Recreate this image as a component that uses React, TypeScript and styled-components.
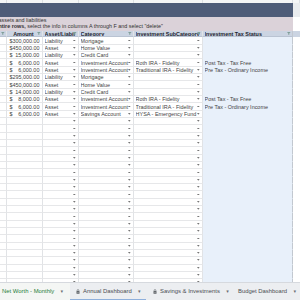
import React from 'react';
import styled, { createGlobalStyle } from 'styled-components';

const Global = createGlobalStyle`
  html, body { margin: 0; padding: 0; background: #fff; overflow: hidden; }
  body { font-family: "Liberation Sans", Arial, sans-serif; }
`;

const COLS = '7px 36px 36px 55px 69px 90px 7px';

const Page = styled.div`
  width: 300px;
  height: 300px;
  display: flex;
  flex-direction: column;
  overflow: hidden;
  background: #fff;
`;

const TopStrip = styled.div`
  height: 3.3px;
  flex: none;
  display: grid;
  grid-template-columns: ${COLS};
  background: #f4f5f6;
`;

const StripCell = styled.div`
  border-right: 1px solid #dcdfe3;
`;

const Band = styled.div<{ $h: number }>`
  height: ${(p) => p.$h}px;
  flex: none;
  display: grid;
  grid-template-columns: 293px 7px;
  overflow: hidden;
`;

const DarkFill = styled.div`
  background: #4e5c78;
`;

const SideFill = styled.div<{ $bg: string }>`
  background: ${(p) => p.$bg};
`;

const NoteFill = styled.div`
  background: #dbd2d9;
  color: #333;
  font-size: 5.4px;
  line-height: 5.6px;
  padding-top: 1.2px;
  white-space: nowrap;
  overflow: hidden;
`;

const NoteLine = styled.div`
  margin-left: -1.5px;
`;

const Sheet = styled.div`
  flex: 1;
  overflow: hidden;
  display: flex;
  flex-direction: column;
`;

const Row = styled.div<{ $header?: boolean }>`
  flex: none;
  height: ${(p) => (p.$header ? 6.8 : 7.33)}px;
  display: grid;
  grid-template-columns: ${COLS};
  background: ${(p) => (p.$header ? '#cbd4e2' : '#fff')};
  font-size: 5.45px;
`;

const Cell = styled.div<{ $tax?: boolean; $header?: boolean; $edge?: boolean }>`
  position: relative;
  box-sizing: border-box;
  display: flex;
  align-items: center;
  padding-left: 1.6px;
  white-space: nowrap;
  overflow: hidden;
  color: ${(p) => (p.$header ? '#1e2530' : '#444')};
  font-weight: ${(p) => (p.$header ? 700 : 400)};
  background: ${(p) => (p.$header ? 'transparent' : p.$tax ? '#e8f0fa' : '#fff')};
  border-bottom: 1px solid ${(p) => (p.$header ? '#b9c3d2' : p.$tax ? '#e8f0fa' : '#e6e7e9')};
  border-right: 1px solid ${(p) => (p.$edge ? '#c2c8d0' : '#e1e3e6')};
`;

const BlankCell = styled.div<{ $header?: boolean }>`
  background: ${(p) => (p.$header ? 'transparent' : '#fff')};
`;

const Money = styled.div`
  display: flex;
  justify-content: space-between;
  width: 100%;
  padding-right: 2.6px;
  padding-left: 0.8px;
  box-sizing: border-box;
`;

const Label = styled.span`
  flex: 1;
  overflow: hidden;
`;

const Arrow = styled.svg`
  position: absolute;
  right: 2.4px;
  top: 50%;
  margin-top: -1px;
  width: 2.6px;
  height: 1.8px;
`;

const Funnel = styled.svg`
  position: absolute;
  right: 1.4px;
  top: 50%;
  margin-top: -1.6px;
  width: 3.6px;
  height: 3.2px;
`;

const TabBar = styled.div`
  height: 18px;
  flex: none;
  display: flex;
  align-items: stretch;
  background: #eceef1;
  border-top: 1px solid #d6d9de;
  box-sizing: border-box;
  font-size: 5.9px;
`;

const Tab = styled.div<{ $active?: boolean; $hover?: boolean; $w: number; $pad: number }>`
  width: ${(p) => p.$w}px;
  flex: none;
  box-sizing: border-box;
  display: flex;
  align-items: center;
  gap: 3px;
  padding-left: ${(p) => p.$pad}px;
  white-space: nowrap;
  color: ${(p) => (p.$active ? '#1f7d3a' : '#4a4d52')};
  background: ${(p) => (p.$active ? '#f4f6f4' : 'transparent')};
  border-bottom: 1.5px solid ${(p) => (p.$hover ? '#8fb0dc' : 'transparent')};
`;

const TabCaret = styled.span`
  font-size: 4.2px;
  margin-left: 2.5px;
  color: #6a6d72;
`;

const Lock = () => (
  <svg width="4" height="5" viewBox="0 0 8 10">
    <rect x="1" y="4" width="6" height="5.5" rx="0.6" fill="#5f6368" />
    <path d="M2.3 4V2.8a1.7 1.7 0 0 1 3.4 0V4" fill="none" stroke="#5f6368" strokeWidth="1.2" />
    <rect x="3.4" y="5.8" width="1.2" height="2" fill="#eceef1" />
  </svg>
);

const DropArrow = () => (
  <Arrow viewBox="0 0 6 4">
    <path d="M0 0h6L3 4z" fill="#777" />
  </Arrow>
);

const FilterIcon = () => (
  <Funnel viewBox="0 0 8 7">
    <path d="M0 0h8L5 3.4V7L3 6V3.4z" fill="#7f9e98" />
  </Funnel>
);

type Entry = { amt: string; type: string; cat: string; sub: string; tax: string };

const DATA: Entry[] = [
  { amt: '300,000.00', type: 'Liability', cat: 'Mortgage', sub: '', tax: '' },
  { amt: '450,000.00', type: 'Asset', cat: 'Home Value', sub: '', tax: '' },
  { amt: '15,000.00', type: 'Liability', cat: 'Credit Card', sub: '', tax: '' },
  { amt: '6,000.00', type: 'Asset', cat: 'Investment Account', sub: 'Roth IRA - Fidelity', tax: 'Post Tax - Tax Free' },
  { amt: '6,000.00', type: 'Asset', cat: 'Investment Account', sub: 'Traditional IRA - Fidelity', tax: 'Pre Tax - Ordinary Income' },
  { amt: '295,000.00', type: 'Liability', cat: 'Mortgage', sub: '', tax: '' },
  { amt: '450,000.00', type: 'Asset', cat: 'Home Value', sub: '', tax: '' },
  { amt: '14,000.00', type: 'Liability', cat: 'Credit Card', sub: '', tax: '' },
  { amt: '8,000.00', type: 'Asset', cat: 'Investment Account', sub: 'Roth IRA - Fidelity', tax: 'Post Tax - Tax Free' },
  { amt: '6,000.00', type: 'Asset', cat: 'Investment Account', sub: 'Traditional IRA - Fidelity', tax: 'Pre Tax - Ordinary Income' },
  { amt: '6,000.00', type: 'Asset', cat: 'Savings Account', sub: 'HYSA - Emergency Fund', tax: '' },
];

const EMPTY_ROWS = 24;

const rows: Entry[] = [
  ...DATA,
  ...Array.from({ length: EMPTY_ROWS }, () => ({ amt: '', type: '', cat: '', sub: '', tax: '' })),
];

export default function App() {
  return (
    <Page>
      <Global />
      <TopStrip>
        {Array.from({ length: 7 }, (_, i) => (
          <StripCell key={i} />
        ))}
      </TopStrip>
      <Band $h={14}>
        <DarkFill />
        <SideFill $bg="#e9ebee" />
      </Band>
      <Band $h={13.4}>
        <NoteFill>
          <NoteLine>assets and liabilities</NoteLine>
          <NoteLine>
            <b>ntire rows,</b> select the info in columns A through F and select "delete"
          </NoteLine>
        </NoteFill>
        <SideFill $bg="#fff" />
      </Band>
      <Sheet>
        <Row $header>
          <Cell $header>
            <FilterIcon />
          </Cell>
          <Cell $header>
            <Label>&nbsp;&nbsp;&nbsp;Amount</Label>
            <FilterIcon />
          </Cell>
          <Cell $header>
            <Label>Asset/Liabil</Label>
            <FilterIcon />
          </Cell>
          <Cell $header>
            <Label>Category</Label>
            <FilterIcon />
          </Cell>
          <Cell $header>
            <Label>Investment SubCategory</Label>
            <FilterIcon />
          </Cell>
          <Cell $header $edge>
            <Label>Investment Tax Status</Label>
            <FilterIcon />
          </Cell>
          <BlankCell $header />
        </Row>
        {rows.map((r, i) => (
          <Row key={i}>
            <Cell />
            <Cell>
              {r.amt && (
                <Money>
                  <span>$</span>
                  <span>{r.amt}</span>
                </Money>
              )}
            </Cell>
            <Cell>
              <Label>{r.type}</Label>
              <DropArrow />
            </Cell>
            <Cell>
              <Label>{r.cat}</Label>
              <DropArrow />
            </Cell>
            <Cell>
              <Label>{r.sub}</Label>
              <DropArrow />
            </Cell>
            <Cell $tax $edge>
              <Label>{r.tax}</Label>
            </Cell>
            <BlankCell />
          </Row>
        ))}
      </Sheet>
      <TabBar>
        <Tab $active $w={70} $pad={2}>
          Net Worth - Monthly<TabCaret>▼</TabCaret>
        </Tab>
        <Tab $hover $w={76} $pad={6}>
          <Lock />
          Annual Dashboard<TabCaret>▼</TabCaret>
        </Tab>
        <Tab $w={86} $pad={7}>
          <Lock />
          Savings &amp; Investments<TabCaret>▼</TabCaret>
        </Tab>
        <Tab $w={68} $pad={6}>
          Budget Dashboard<TabCaret>▼</TabCaret>
        </Tab>
      </TabBar>
    </Page>
  );
}
